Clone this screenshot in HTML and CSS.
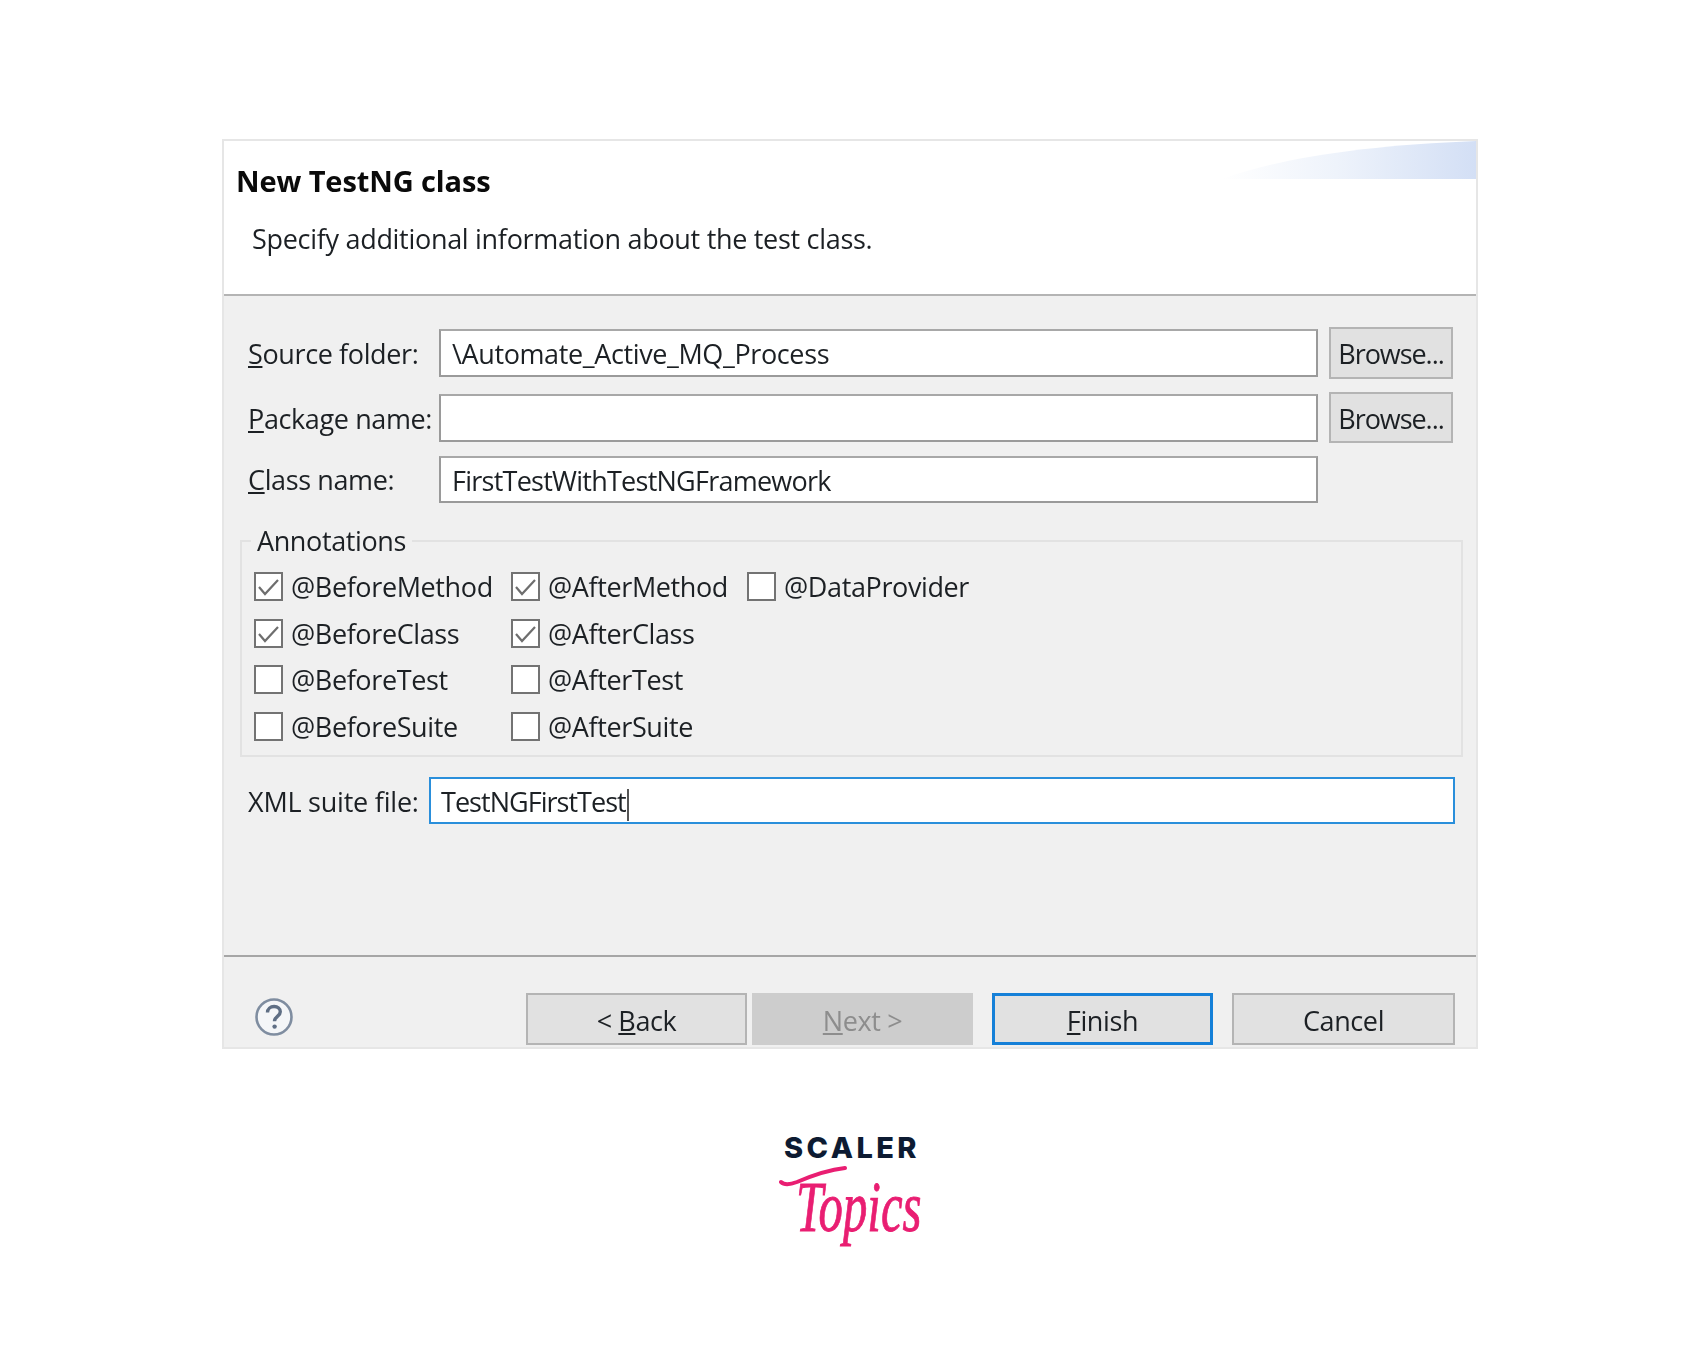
FILE: index.html
```html
<!DOCTYPE html>
<html lang="en">
<head>
<meta charset="utf-8">
<title>New TestNG class</title>
<link rel="stylesheet" href="styles.css">
</head>
<body>
<main class="page">
  <section class="dialog">
    <header class="header">
      <svg class="banner" width="254" height="38" viewBox="0 0 254 38" aria-hidden="true">
        <defs>
          <linearGradient id="bannerFill" x1="0" x2="1" y1="0" y2="0">
            <stop offset="0" stop-color="#ffffff"/>
            <stop offset="0.45" stop-color="#eef3fb"/>
            <stop offset="1" stop-color="#d3dff5"/>
          </linearGradient>
        </defs>
        <path d="M0 38 C60 16 150 4 254 0 L254 38 Z" fill="url(#bannerFill)"/>
      </svg>
      <h1 class="title">New TestNG class</h1>
      <p class="subtitle">Specify additional information about the test class.</p>
    </header>

    <div class="body">
      <div class="fields">
        <label class="label"><u>S</u>ource folder:</label>
        <div class="input input-a">\Automate_Active_MQ_Process</div>
        <div class="btn browse">Browse...</div>

        <label class="label"><u>P</u>ackage name:</label>
        <div class="input input-b"></div>
        <div class="btn browse">Browse...</div>

        <label class="label"><u>C</u>lass name:</label>
        <div class="input input-c">FirstTestWithTestNGFramework</div>
      </div>

      <div class="group">
        <span class="legend">Annotations</span>
        <div class="checks">
          <div class="check"><span class="box"><svg viewBox="0 0 25 25" class="tick"><path d="M3 13l6 7L22 6"/></svg></span>@BeforeMethod</div>
          <div class="check"><span class="box"><svg viewBox="0 0 25 25" class="tick"><path d="M3 13l6 7L22 6"/></svg></span>@AfterMethod</div>
          <div class="check"><span class="box"></span>@DataProvider</div>

          <div class="check"><span class="box"><svg viewBox="0 0 25 25" class="tick"><path d="M3 13l6 7L22 6"/></svg></span>@BeforeClass</div>
          <div class="check"><span class="box"><svg viewBox="0 0 25 25" class="tick"><path d="M3 13l6 7L22 6"/></svg></span>@AfterClass</div>
          <div class="check-empty"></div>

          <div class="check"><span class="box"></span>@BeforeTest</div>
          <div class="check"><span class="box"></span>@AfterTest</div>
          <div class="check-empty"></div>

          <div class="check"><span class="box"></span>@BeforeSuite</div>
          <div class="check"><span class="box"></span>@AfterSuite</div>
          <div class="check-empty"></div>
        </div>
      </div>

      <div class="xml-row">
        <label class="label xml-label">XML suite file:</label>
        <div class="input input-focus">TestNGFirstTest<span class="caret"></span></div>
      </div>
    </div>

    <footer class="footer">
      <svg class="help" width="40" height="40" viewBox="0 0 40 40" aria-hidden="true">
        <circle cx="20" cy="20" r="17.5" fill="#f4f6f8" stroke="#7f8da0" stroke-width="2.6"/>
        <path d="M13.5 15.5c0-3.6 2.9-6 6.6-6s6.2 2.1 6.2 5.2c0 4.8-5.8 4.6-5.8 9.6" fill="none" stroke="#5f6f85" stroke-width="3.4"/>
        <circle cx="20.6" cy="29.6" r="2.2" fill="#5f6f85"/>
      </svg>
      <div class="btn nav back">&lt; <u>B</u>ack</div>
      <div class="btn nav next"><u>N</u>ext &gt;</div>
      <div class="btn nav finish"><u>F</u>inish</div>
      <div class="btn nav cancel">Cancel</div>
    </footer>
  </section>

  <div class="logo">
    <div class="logo-top">SCALER</div>
    <div class="logo-bottom">
      <svg class="swash" width="70" height="24" viewBox="0 0 70 24" aria-hidden="true">
        <path d="M2 17c3 3 8 3 16 0 14-6 30-12 48-14" fill="none" stroke="#e91e72" stroke-width="4" stroke-linecap="round"/>
      </svg>
      <span class="logo-script">Topics</span>
    </div>
  </div>
</main>
</body>
</html>
```
FILE: styles.css
```css
* { box-sizing: border-box; }
html, body { margin: 0; background: #fff; }
.page { width: 1700px; height: 1355px; padding: 139px 0 0 222px; overflow: hidden; }

.dialog {
  width: 1256px;
  height: 910px;
  border: 2px solid #e6e6e6;
  background: #f0f0f0;
  display: flex;
  flex-direction: column;
  font-family: "Open Sans", "Noto Sans", sans-serif;
  font-size: 27px;
  letter-spacing: -0.38px;
  color: #1c2024;
  filter: blur(0.7px);
}

.header {
  position: relative;
  height: 155px;
  background: #fff;
  border-bottom: 2px solid #b4b4b4;
  padding: 21px 0 0 12px;
}
.banner { position: absolute; right: 0; top: 0; }
.title { margin: 0; font-size: 29px; font-weight: 700; line-height: 38px; letter-spacing: -0.1px; color: #0a0a0a; }
.subtitle { margin: 21px 0 0 16px; line-height: 36px; letter-spacing: -0.3px; }

.body { flex: 1; padding: 31px 13px 0 16px; }

.fields {
  display: grid;
  grid-template-columns: 191px 879px 124px;
  grid-template-rows: 52px 51px 46px;
  row-gap: 13px;
  padding-left: 8px;
  align-items: center;
}
.fields .btn { margin-left: 11px; width: 124px; }
.label { line-height: 36px; padding-top: 2px; white-space: nowrap; }
.input {
  background: #fff;
  border: 2px solid #9a9a9a;
  border-top-color: #a8a8a8;
  padding-left: 11px;
  line-height: 45px;
  white-space: nowrap;
}
.input-a { height: 48px; }
.input-b { height: 48px; }
.input-c { height: 47px; letter-spacing: -0.75px; }

.btn {
  background: #e1e1e1;
  border: 2px solid #b4b4b4;
  text-align: center;
  white-space: nowrap;
}
.browse { height: 100%; line-height: 49px; letter-spacing: -1.05px; }

.group {
  position: relative;
  height: 217px;
  margin-top: 38px;
  border: 2px solid #e2e2e2;
  padding: 30px 0 0 12px;
}
.legend {
  position: absolute;
  left: 9px;
  top: -19px;
  padding: 0 6px;
  line-height: 36px;
  background: #f0f0f0;
}
.checks {
  display: grid;
  grid-template-columns: 257px 236px auto;
  grid-auto-rows: 46.5px;
  justify-content: start;
}
.check { display: flex; align-items: center; height: 29px; white-space: nowrap; line-height: 29px; }
.box {
  flex: none;
  width: 29px;
  height: 29px;
  margin-right: 8px;
  background: #fff;
  border: 2px solid #737373;
}
.tick { display: block; width: 25px; height: 25px; }
.tick path { fill: none; stroke: #6e6e6e; stroke-width: 2.2; }

.xml-row { display: flex; align-items: center; margin-top: 20px; padding-left: 8px; }
.xml-label { width: 181px; flex: none; letter-spacing: -0.22px; }
.input-focus {
  width: 1026px;
  height: 47px;
  padding-left: 10px;
  border-color: #2a8fdb;
  letter-spacing: -0.97px;
}
.caret {
  display: inline-block;
  width: 2px;
  height: 32px;
  margin-left: 1px;
  vertical-align: middle;
  background: #555;
}

.footer {
  height: 92px;
  border-top: 2px solid #a6a6a6;
  display: flex;
  align-items: flex-start;
  padding: 36px 0 0 30px;
}
.help { flex: none; margin-right: 232px; margin-top: 4px; }
.nav { width: 221px; height: 52px; line-height: 51px; }
.next { margin-left: 5px; background: #cdcdcd; border-color: #cdcdcd; color: #8d8d8d; }
.finish { margin-left: 19px; border-color: #1580d8; border-width: 3px; line-height: 49px; }
.cancel { margin-left: 19px; width: 223px; }

.logo { width: 1260px; margin-top: 81px; display: flex; flex-direction: column; align-items: center; color: #0d1b32; }
.logo-top {
  font-family: "Inter", "Liberation Sans", sans-serif;
  font-weight: 800;
  font-size: 29px;
  line-height: 36px;
  letter-spacing: 3.4px;
}
.logo-bottom { position: relative; width: 144px; height: 96px; margin-right: 2px; }
.logo-script {
  display: inline-block;
  font-family: "Liberation Serif", serif;
  font-style: italic;
  font-size: 56px;
  line-height: 64px;
  color: #e91e72;
  -webkit-text-stroke: 0.7px #e91e72;
  margin-left: 17px;
  white-space: nowrap;
  transform: scale(0.87, 1.28);
  transform-origin: left top;
}
.swash { position: absolute; left: 0; top: -1px; }
```
